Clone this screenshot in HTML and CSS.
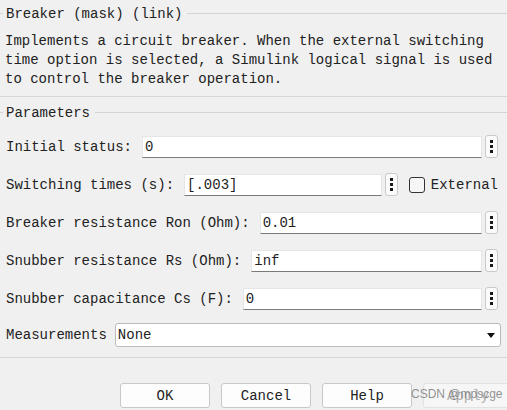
FILE: index.html
```html
<!DOCTYPE html>
<html>
<head>
<meta charset="utf-8">
<link rel="stylesheet" href="styles.css">
</head>
<body>
<div class="dialog">
  <div class="group-head desc-head">
    <span class="tick"></span><span class="gtitle">Breaker (mask) (link)</span><span class="rule"></span>
  </div>
  <p class="desc">Implements a circuit breaker. When the external switching<br>time option is selected, a Simulink logical signal is used<br>to control the breaker operation.</p>
  <hr class="sep">
  <div class="group-head param-head">
    <span class="tick"></span><span class="gtitle">Parameters</span><span class="rule"></span>
  </div>
  <div class="params">
    <div class="row">
      <span class="label">Initial status:</span>
      <span class="field">0</span>
      <span class="kebab"><i></i><i></i><i></i></span>
    </div>
    <div class="row">
      <span class="label">Switching times (s):</span>
      <span class="field">[.003]</span>
      <span class="kebab"><i></i><i></i><i></i></span>
      <span class="check"><span class="box"></span>External</span>
    </div>
    <div class="row">
      <span class="label">Breaker resistance Ron (Ohm):</span>
      <span class="field">0.01</span>
      <span class="kebab"><i></i><i></i><i></i></span>
    </div>
    <div class="row">
      <span class="label">Snubber resistance Rs (Ohm):</span>
      <span class="field">inf</span>
      <span class="kebab"><i></i><i></i><i></i></span>
    </div>
    <div class="row">
      <span class="label">Snubber capacitance Cs (F):</span>
      <span class="field">0</span>
      <span class="kebab"><i></i><i></i><i></i></span>
    </div>
    <div class="row select-row">
      <span class="label">Measurements</span>
      <span class="select">None<span class="arrow"></span></span>
    </div>
  </div>
  <hr class="sep bottom-sep">
  <div class="buttons">
    <span class="btn">OK</span>
    <span class="btn">Cancel</span>
    <span class="btn">Help</span>
    <span class="btn disabled">Apply</span>
  </div>
  <span class="watermark">CSDN @mpscge</span>
</div>
</body>
</html>
```

FILE: styles.css
```css
html, body {
  margin: 0;
  padding: 0;
  background: #f0f0f0;
  overflow: hidden;
}
body {
  width: 507px;
  height: 410px;
  font-family: "Liberation Mono", "DejaVu Sans Mono", monospace;
  font-size: 14px;
  color: #222;
}
.dialog {
  position: relative;
  width: 507px;
  height: 410px;
}
.group-head {
  display: flex;
  align-items: center;
}
.desc-head {
  height: 28px;
}
.param-head {
  height: 32px;
}
.tick {
  width: 3px;
  height: 1px;
  background: #d4d4d4;
  margin-top: -2px;
}
.gtitle {
  padding: 0 5px 0 3px;
  line-height: 18px;
}
.rule {
  flex: 1;
  height: 1px;
  background: #d4d4d4;
  margin-top: -2px;
}
.desc {
  margin: 0;
  padding: 4px 0 0 5px;
  line-height: 19px;
}
.sep {
  border: none;
  height: 1px;
  background: #d6d6d6;
  margin: 7px 0 0 0;
}
.params {
  display: flex;
  flex-direction: column;
  gap: 15px;
  margin-top: 6px;
  padding: 0 9px 0 6px;
}
.row {
  display: flex;
  align-items: center;
  height: 23px;
}
.label {
  flex: none;
  white-space: pre;
  margin-right: 10px;
}
.field {
  flex: 1;
  min-width: 0;
  height: 22px;
  box-sizing: border-box;
  background: #fff;
  border: 1px solid #e6e6e6;
  border-bottom: 1px solid #7a7a7a;
  padding-left: 2px;
  line-height: 21px;
  white-space: pre;
}
.kebab {
  flex: none;
  width: 13px;
  height: 23px;
  box-sizing: border-box;
  margin-left: 3px;
  border: 1px solid #c9c9c9;
  border-radius: 3px;
  background: #fbfbfb;
  display: flex;
  flex-direction: column;
  align-items: center;
  justify-content: center;
  gap: 2px;
}
.kebab i {
  display: block;
  width: 3px;
  height: 3px;
  background: #1a1a1a;
}
.check {
  flex: none;
  display: flex;
  align-items: center;
  margin-left: 11px;
  white-space: nowrap;
}
.box {
  flex: none;
  width: 16px;
  height: 16px;
  box-sizing: border-box;
  border: 1px solid #333;
  border-radius: 3px;
  background: #f6f6f6;
  margin-right: 6px;
}
.select-row {
  margin-top: -2px;
  height: 24px;
}
.label + .select {
  margin-left: -2px;
}
.select {
  flex: 1;
  height: 24px;
  box-sizing: border-box;
  background: #fff;
  border: 1px solid #bcbcbc;
  border-radius: 3px;
  padding-left: 2px;
  line-height: 22px;
  display: flex;
  align-items: center;
  justify-content: space-between;
  margin-right: -3px;
}
.arrow {
  width: 0;
  height: 0;
  border-left: 4px solid transparent;
  border-right: 4px solid transparent;
  border-top: 5px solid #111;
  margin-right: 5px;
}
.bottom-sep {
  margin-top: 10px;
}
.buttons {
  display: flex;
  gap: 10px;
  padding-left: 120px;
  margin-top: 25px;
}
.btn {
  flex: none;
  width: 90px;
  height: 25px;
  box-sizing: border-box;
  border: 1px solid #c8c8c8;
  border-radius: 3px;
  background: #fdfdfd;
  text-align: center;
  line-height: 24px;
}
.btn + .btn {
  margin-left: 1px;
}
.btn.disabled {
  color: #b0b0b0;
  border-color: #e2e2e2;
  background: #f6f6f6;
}
.watermark {
  position: absolute;
  left: 411px;
  top: 387px;
  white-space: nowrap;
  font-family: "Liberation Sans", Arial, sans-serif;
  font-size: 12px;
  color: rgba(110, 110, 110, 0.75);
  line-height: 15px;
}
```
